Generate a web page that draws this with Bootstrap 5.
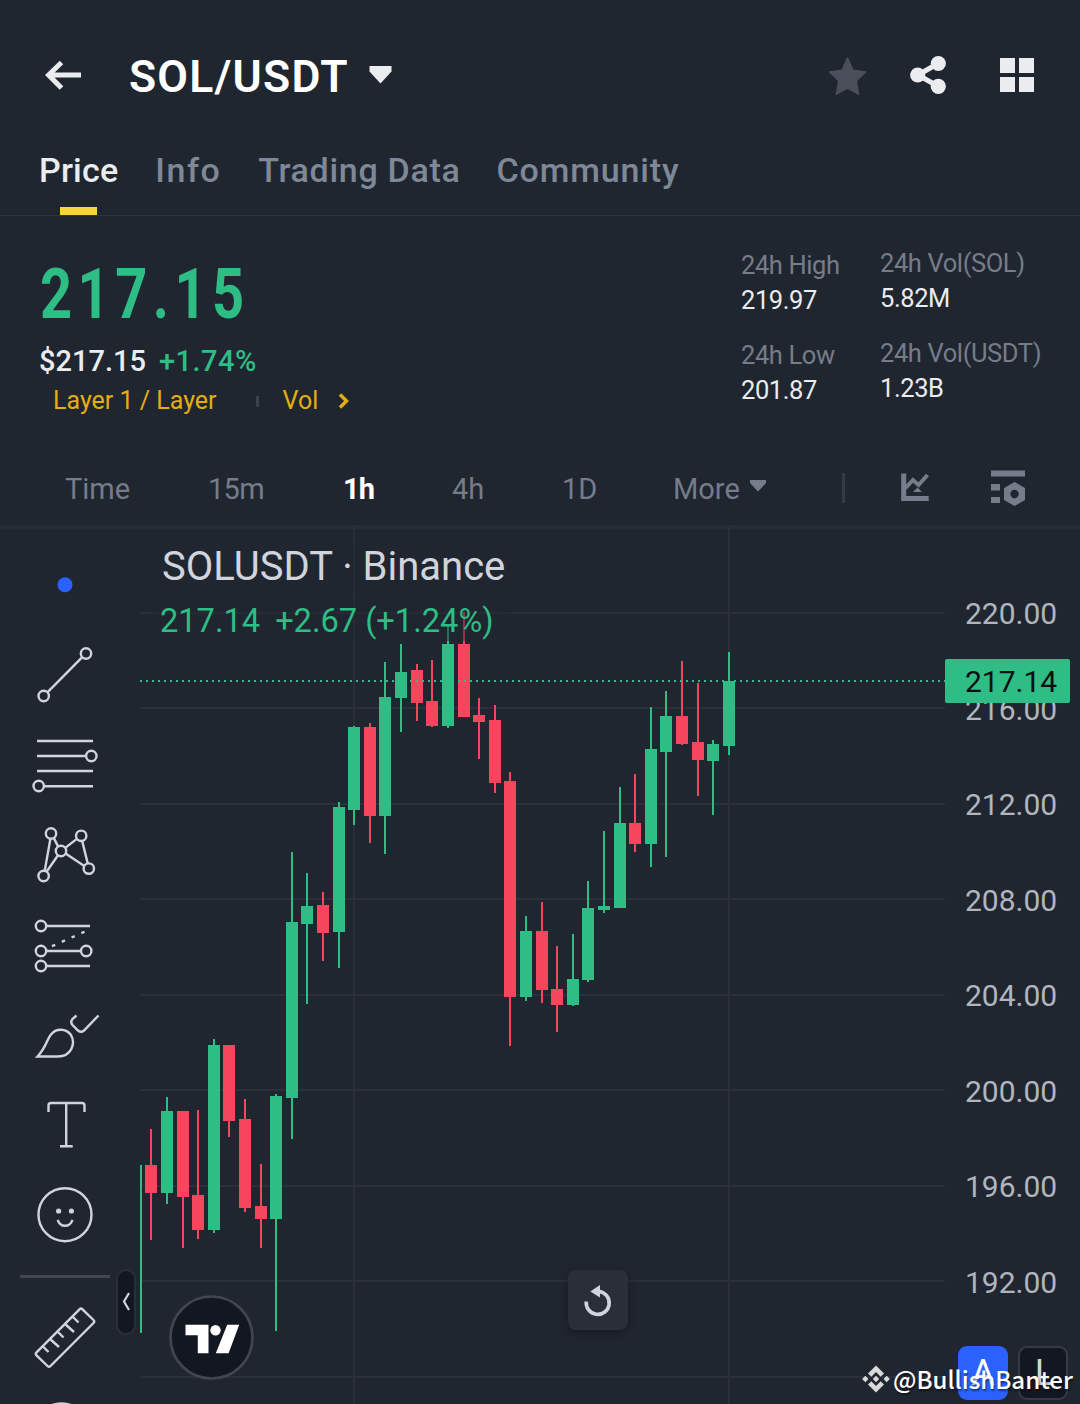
<!DOCTYPE html>
<html lang="en" data-bs-theme="dark">
<head>
<meta charset="utf-8">
<meta name="viewport" content="width=device-width, initial-scale=1">
<title>SOL/USDT</title>
<link href="https://cdn.jsdelivr.net/npm/bootstrap@5.3.0/dist/css/bootstrap.min.css" rel="stylesheet">
<style>
  :root { --bg:#202630; --up:#2ebd85; --down:#f6465d; --muted:#848e9c; --dim:#767c8a; --bright:#eaecef; --tool:#d1d4dc; --gold:#f0b90b; }
  body { background:var(--bg); font-family:Roboto,"Liberation Sans",sans-serif; color:var(--bright); width:1080px; height:1404px; overflow:hidden; }
  svg { display:block; flex:none; }
  .topbar { height:126px; padding:28px 46px 0 45px; }
  .pair { font-size:44.5px; font-weight:600; color:#fff; line-height:66px; letter-spacing:1.2px; margin:0 20px 0 47px; }
  .tabs { height:90px; padding:24px 0 0 39px; border-bottom:1px solid #2f3641; gap:37px; font-size:34px; font-weight:500; line-height:41px; }
  .tabs .nav-link { padding:0; color:#7f8897; line-height:41px; }
  .tabs .nav-link.active { color:var(--bright); }
  .tabs .nav-link.active::after { content:""; display:block; width:37px; height:8px; background:#fcd535; margin:16px auto 0; }
  .tab-a { letter-spacing:.2px; }
  .tab-b { letter-spacing:1.5px; }
  .tab-c { letter-spacing:.7px; }
  .tab-d { letter-spacing:.85px; margin-left:-1px; }
  .summary { height:234px; padding:43px 38px 0 39px; }
  .last { font-size:70px; line-height:70px; font-weight:700; color:var(--up); transform:scaleX(.8); transform-origin:0 50%; letter-spacing:6.8px; margin-left:1px; width:210px; white-space:nowrap; }
  .sub { font-size:29px; line-height:38px; margin-top:13px; font-weight:500; }
  .sub .chg { letter-spacing:.5px; color:var(--up); margin-left:13px; }
  .tags { font-size:25px; line-height:40px; color:#e3ae12; padding:1px 0 0 14px; }
  .tick { width:3px; height:11px; background:#3a414d; margin:0 24px 0 39px; }
  .stat { font-size:25.5px; line-height:35px; margin-bottom:20px; white-space:nowrap; letter-spacing:-.4px; }
  .stat div:first-child { color:var(--dim); }
  .stats-a { width:139px; margin-top:-11px; }
  .stats-b { width:162px; margin-top:-13px; }
  .frames { height:75px; padding:2px 0 0 65px; font-size:29px; color:var(--dim); display:grid; grid-template-columns:143px 135px 109px 110px 111px 169px 59px 89px auto; align-items:center; }
  .frames > span:not(.vr-bar) { padding-top:3px; }
  .vr-bar { width:3px; height:30px; background:#343a46; margin-bottom:2px; }
  .chartbox { height:879px; border-top:4px solid #262c36; }
  .tools { width:140px; padding-top:11px; }
  .tools hr { width:90px; margin:15px 0 12px 20px; border:0; height:3px; background:#434651; opacity:1; }
  .tools svg { stroke:var(--tool); fill:none; stroke-width:2.4; }
  .plot { width:805px; margin-top:-4px; }
  .axis { width:135px; padding:37px 0 0 20px; font-size:30px; color:#b2b5be; }
  .axis div { height:95.5px; line-height:95.5px; }
  .legend { left:150px; top:14px; }
  .legend > div { background:rgba(32,38,48,.5); width:max-content; white-space:pre; }
  .lg-name { font-size:40px; line-height:48px; padding:0 12px; color:var(--tool); }
  .lg-vals { font-size:32.6px; line-height:40px; margin-top:10px; padding:0 16px 0 10px; color:var(--up); }
  .tagprice { left:945px; top:130px; width:125px; height:44px; background:var(--up); color:#0c0e12; font-size:30px; line-height:46px; padding-left:20px; border-radius:2px; }
  .fold { left:116px; top:740px; width:20px; height:66px; border-radius:10px; background:#131722; border:2px solid #2a2e39; }
  .tvmark { left:168.5px; top:765.5px; }
  .reset { left:568px; top:741px; width:60px; height:60px; border-radius:8px; background:#2a2e39; border:0; padding:0; box-shadow:0 3px 10px rgba(0,0,0,.35); }
  .scale-btns { left:958px; top:817px; gap:10px; }
  .scale-btns div { width:50px; height:54px; border-radius:9px; font-size:36px; line-height:54px; text-align:center; color:var(--tool); }
  .auto { background:#2962ff; color:#fff !important; }
  .logs { background:#131722; border:2px solid #363a45; line-height:50px !important; padding-left:3px; }
  .wm { left:862px; top:1359px; height:40px; gap:3px; font:500 24.1px/40px "Noto Sans CJK SC",sans-serif; color:#fff; text-shadow:1px 2px 2px rgba(0,0,0,.5); }
</style>
</head>
<body class="position-relative">
<header class="topbar d-flex align-items-start">
  <svg class="mt-3" width="37" height="60" viewBox="0 0 37 60" fill="none" stroke="#eaecef" stroke-width="5"><path d="M36 31H3M16.500 18.500L3.500 31l13 13"/></svg>
  <div class="pair mt-3">SOL/USDT</div>
  <svg class="mt-3" width="24" height="60" viewBox="0 0 24 60"><path d="M.5 22h22v5.500L11.500 39.500.5 27.500z" fill="#eaecef"/></svg>
  <div class="d-flex ms-auto mt-3">
    <svg width="38" height="60" viewBox="829 44 38 60"><path d="M847.500 58l5.400 12.300 12.600 1.700-9.300 9 2.400 13.200-11.100-6-11.100 6 2.400-13.200-9.300-9 12.600-1.700z" fill="#4a4f5b" stroke="#4a4f5b" stroke-width="1.500" stroke-linejoin="round"/></svg>
    <svg style="margin-left:43px" width="38" height="60" viewBox="910 44 38 60"><g fill="#eaecef"><circle cx="917.700" cy="75" r="7.600"/><circle cx="938.300" cy="63.500" r="7.600"/><circle cx="938.300" cy="86.300" r="7.600"/></g><path d="M938 63.500L918 75l20 11.300" fill="none" stroke="#eaecef" stroke-width="5"/></svg>
    <svg style="margin-left:52px" width="34" height="60" viewBox="1000 44 34 60" fill="#eaecef"><path d="M1000 58h15v15h-15zM1019 58h15v15h-15zM1000 77h15v15h-15zM1019 77h15v15h-15z"/></svg>
  </div>
</header>

<nav class="nav tabs flex-nowrap">
  <a class="nav-link active tab-a">Price</a>
  <a class="nav-link tab-b">Info</a>
  <a class="nav-link tab-c">Trading Data</a>
  <a class="nav-link tab-d">Community</a>
</nav>

<section class="summary d-flex justify-content-between">
  <div>
    <div class="last">217.15</div>
    <div class="sub d-flex"><span>$217.15</span><span class="chg">+1.74%</span></div>
    <div class="tags d-flex align-items-center"><span>Layer 1 / Layer</span><span class="tick"></span><span>Vol</span>
      <svg style="margin-left:20px" width="12" height="18" viewBox="0 0 12 18" fill="none" stroke="#e3ae12" stroke-width="3.500"><path d="M2 2.500L8.500 9 2 15.500"/></svg></div>
  </div>
  <div class="d-flex">
    <div class="stats-a">
      <div class="stat"><div>24h High</div><div>219.97</div></div>
      <div class="stat"><div>24h Low</div><div>201.87</div></div>
    </div>
    <div class="stats-b">
      <div class="stat"><div>24h Vol(SOL)</div><div>5.82M</div></div>
      <div class="stat"><div>24h Vol(USDT)</div><div>1.23B</div></div>
    </div>
  </div>
</section>

<section class="frames">
  <span>Time</span><span style="letter-spacing:-.7px">15m</span><span class="text-white fw-bold" style="letter-spacing:-.8px">1h</span><span>4h</span><span>1D</span>
  <span class="d-flex align-items-center">More<svg class="ms-2 mb-1" width="20" height="20" viewBox="0 0 20 20"><path d="M2 2h16v3l-8 8.500L2 5z" fill="#767c8a"/></svg></span>
  <span class="vr-bar"></span>
  <svg class="mb-1" width="28" height="34" viewBox="901 470 28 34" fill="none" stroke="#767c8a"><path d="M903.700 473.500v25h25" stroke-width="5"/><path d="M905 488.500l8-8.500 5.500 5 9-10" stroke-width="4"/><path d="M913 492l4.500-4.500 4.500 4.500z" fill="#767c8a" stroke="none"/></svg>
  <svg width="36" height="40" viewBox="990 469 36 40" fill="#767c8a"><path d="M991 470.500h34v6h-34zM991 484h9v6.500h-9zM991 497h9v6h-9z"/><path fill-rule="evenodd" d="M1014.500 482l10.500 6v12l-10.500 6-10.500-6v-12zM1014.500 489.800a4.200 4.200 0 1 0 .01 0z"/></svg>
</section>

<main class="chartbox d-flex position-relative">
  <div class="tools">
    <svg width="130" height="90" viewBox="0 0 130 90"><circle cx="65" cy="44.700" r="7.500" fill="#2962ff" stroke="none"/></svg>
    <svg width="130" height="90" viewBox="0 0 130 90"><circle cx="86" cy="23.500" r="5.200"/><circle cx="43.700" cy="66" r="5.200"/><path d="M82.300 27.200L47.400 62.300"/></svg>
    <svg width="130" height="90" viewBox="0 0 130 90"><path d="M37 21h56M37 36h49M37 51h56M44 66.200h49"/><circle cx="91.300" cy="36" r="5.200"/><circle cx="38.700" cy="66" r="5.200"/></svg>
    <svg width="130" height="90" viewBox="0 0 130 90"><circle cx="51" cy="23.500" r="5.200"/><circle cx="81.200" cy="25.800" r="5.200"/><circle cx="61" cy="41" r="5.200"/><circle cx="43.600" cy="66" r="5.200"/><circle cx="88.800" cy="58.600" r="5.200"/><path d="M50.400 28.700L44.700 60.900M53.700 27.900l4.500 8.700M58 45.300L46.600 61.700M65.200 37.900l11.700-9M65.600 43.600l18.700 12.300M82.200 31l5.500 22.400"/></svg>
    <svg width="130" height="90" viewBox="0 0 130 90"><path d="M46.300 26H90M46.300 51h34.500M46.300 66H90"/><path d="M52 46.200l36-16" stroke-dasharray="3.500 7.200"/><circle cx="41" cy="26" r="5.200"/><circle cx="41" cy="51" r="5.200"/><circle cx="86.200" cy="51" r="5.200"/><circle cx="41" cy="66" r="5.200"/></svg>
    <svg width="130" height="90" viewBox="0 0 130 90"><path d="M37.500 66.500C46 58 47 49 51 44.500 56 38 66 38 71 45c5 9 0 21.500-13 21.500zM76.500 25.500L72.500 29q-2.500 3 0 6l5.500 5.500q3 2.500 6 0L98.500 25.500"/></svg>
    <svg width="130" height="90" viewBox="0 0 130 90"><path d="M48.500 32v-6.500q0-2.500 2.500-2.500h31q2.500 0 2.500 2.500V32M66.200 23v43M60 66.200h12.700"/></svg>
    <svg width="130" height="90" viewBox="0 0 130 90"><circle cx="65" cy="44.700" r="26.500"/><g fill="#d1d4dc" stroke="none"><circle cx="58.600" cy="41" r="2.600"/><circle cx="71.400" cy="41" r="2.600"/></g><path d="M57.700 49.800c2.500 8 12 8 14.800 0"/></svg>
    <hr>
    <svg width="130" height="114" viewBox="0 1290 130 114"><path d="M79.500 1309.300q1.500-1.500 3 0l11 10.700q1.500 1.500 0 3l-43 43q-1.500 1.500-3 0l-11-10.700q-1.500-1.500 0-3zM42.500 1346l6 6M50 1339l9 8M57.500 1331.500l6 6M65 1324l9 8M72.500 1316.500l6 6"/><circle cx="61.500" cy="1431" r="27.500"/></svg>
  </div>
  <div class="plot"><svg id="candles" width="805" height="879" viewBox="140 525 805 879" shape-rendering="crispEdges"></svg></div>
  <div class="axis"><div>220.00</div><div>216.00</div><div>212.00</div><div>208.00</div><div>204.00</div><div>200.00</div><div>196.00</div><div>192.00</div></div>

  <div class="position-absolute legend">
    <div class="lg-name">SOLUSDT · Binance</div>
    <div class="lg-vals"><span>217.14</span><span style="margin-left:15px">+2.67 (+1.24%)</span></div>
  </div>
  <div class="position-absolute tagprice">217.14</div>
  <div class="position-absolute fold"><svg width="16" height="62" viewBox="0 0 16 62" fill="none" stroke="#d1d4dc" stroke-width="2.200"><path d="M11 22L6 30.500l5 8.500"/></svg></div>
  <svg class="position-absolute tvmark" width="85" height="85" viewBox="168.500 1294.500 85 85"><circle cx="211" cy="1337" r="41" fill="#131722" stroke="#434651" stroke-width="2.600"/><path d="M185 1324.300h23v28.400h-10.700v-18H185zM226.700 1324.300h12l-10.600 28.400h-12.800z" fill="#fff"/><circle cx="215" cy="1329.700" r="5.200" fill="#fff"/></svg>
  <button class="position-absolute reset"><svg width="60" height="60" viewBox="568 1270 60 60"><path d="M586.300 1301.500a11.500 11.500 0 1 0 13-10" fill="none" stroke="#d1d4dc" stroke-width="3.600"/><path d="M590.300 1291.500l9.700-6.500v12.500z" fill="#d1d4dc"/></svg></button>
  <div class="position-absolute scale-btns d-flex"><div class="auto">A</div><div class="logs">L</div></div>
</main>

<div class="position-absolute wm d-flex align-items-center"><svg width="28" height="28" viewBox="0 0 28 28" fill="#d9d9d9"><path d="M14 .5l8 8-3.300 3.200L14 7l-4.700 4.700L6 8.500zM14 27.500l8-8-3.300-3.200L14 21l-4.700-4.700L6 19.500zM14 10.800l3.200 3.200-3.200 3.200-3.200-3.200zM3.300 10.800L6.500 14l-3.200 3.200L.1 14zM24.700 10.800l3.200 3.200-3.200 3.200-3.200-3.200z"/></svg><span>@BullishBanter</span></div>

<script src="https://cdn.jsdelivr.net/npm/bootstrap@5.3.0/dist/js/bootstrap.bundle.min.js"></script>
<script>
  // centre x, high, body top, body bottom, low, direction
  const bars = [
    [151,1129,1165,1193,1240,0],[167,1097,1111,1193,1204,1],[183,1111,1111,1197,1248,0],[198,1110,1195,1230,1239,0],
    [214,1039,1045,1230,1233,1],[229,1045,1045,1121,1137,0],[245,1099,1119,1208,1212,0],[261,1164,1206,1219,1248,0],
    [276,1094,1096,1219,1331,1],[292,852,922,1098,1139,1],[307,873,906,924,1004,1],[323,892,905,933,961,0],
    [339,802,807,932,968,1],[354,726,727,810,825,1],[370,723,727,816,843,0],[385,662,697,816,854,1],
    [401,644,672,698,732,1],[417,664,670,703,721,0],[432,660,701,726,727,0],[448,625,644,726,728,1],
    [464,612,644,717,717,0],[479,698,715,722,759,0],[495,705,720,783,793,0],[510,772,781,997,1046,0],
    [526,916,931,997,1001,1],[542,902,931,990,1003,0],[557,946,989,1005,1032,0],[573,934,979,1005,1006,1],
    [588,881,908,980,982,1],[604,831,906,910,913,1],[620,787,823,908,908,1],[635,774,823,844,852,0],
    [651,707,749,844,867,1],[666,691,716,752,857,1],[682,661,716,744,745,0],[698,683,742,760,796,0],
    [713,740,744,761,815,1],[729,652,681,746,755,1]];
  const rect = (x, y, w, h, c) => `<rect x="${x}" y="${y}" width="${w}" height="${h}" fill="${c}"/>`;
  let out = '';
  [612,707,803,898,994,1089,1185,1280,1376].forEach(y => out += rect(140, y, 805, 2, '#2a2f39'));
  [353,728].forEach(x => out += rect(x, 525, 2, 879, '#2a2f39'));
  out += rect(140, 1165, 2, 168, '#2ebd85');
  bars.forEach(([x, hi, top, bottom, lo, up]) => {
    const c = up ? '#2ebd85' : '#f6465d';
    out += rect(x - 1, hi, 2, lo - hi, c) + rect(x - 6, top, 12, bottom - top, c);
  });
  out += '<path d="M140 681H945" stroke="#2ebd85" stroke-width="2" stroke-dasharray="2 4"/>';
  document.getElementById('candles').innerHTML = out;
</script>
</body>
</html>
